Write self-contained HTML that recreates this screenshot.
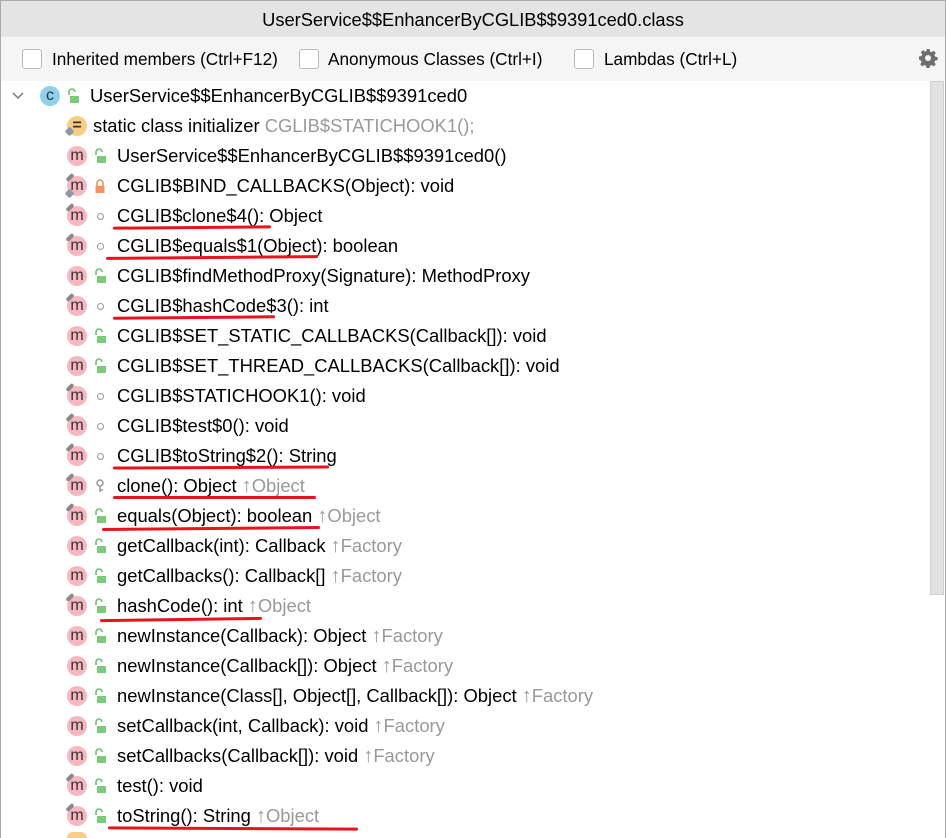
<!DOCTYPE html>
<html style="overflow:hidden;width:946px;height:838px"><head><meta charset="utf-8"><style>
*{margin:0;padding:0;box-sizing:border-box}
body{width:946px;height:838px;overflow:hidden;background:#fff;font-family:"Liberation Sans","Noto Sans CJK SC",sans-serif;position:relative;color:#000}
.title{position:absolute;left:0;top:0;width:946px;height:37px;background:#e4e4e4;border:1px solid #aaa;border-bottom:none;text-align:center;font-size:18.3px;line-height:37px;color:#000}
.tool{position:absolute;left:0;top:37px;width:946px;height:44px;background:#f5f5f5;border-left:1px solid #aaa;border-right:1px solid #aaa}
.cb{position:absolute;top:12px;width:20px;height:20px;border:1px solid #b8b8b8;border-radius:3px;background:#fff}
.lbl{position:absolute;top:12px;font-size:17.2px;line-height:20px;color:#000}
.tree{position:absolute;left:0;top:81px;width:946px;height:757px;border-left:1px solid #aaa;border-right:1px solid #aaa}
.sb{position:absolute;left:930px;top:81px;width:14px;height:514px;background:#e2e2e2;border:1px solid #d0d0d0}
.row{position:absolute;height:30px;font-size:18.4px;line-height:30px;white-space:nowrap}
.g{color:#999}
.ar{font-size:20px}
.ic{position:absolute;width:20px;height:20px;border-radius:50%;font-size:16px;line-height:19px;text-align:center;color:#333}
.m{background:#f7b7c0}
.sl{position:absolute;width:4px;height:9px;background:#888;transform:rotate(45deg);border-radius:2px}
.red{position:absolute;height:3px;background:#e8131d;border-radius:2px}
</style></head><body>
<div class="title">UserService$$EnhancerByCGLIB$$9391ced0.class</div>
<div class="tool">
<div class="cb" style="left:21px"></div><div class="lbl" style="left:51px">Inherited members (Ctrl+F12)</div>
<div class="cb" style="left:298px"></div><div class="lbl" style="left:327px">Anonymous Classes (Ctrl+I)</div>
<div class="cb" style="left:573px"></div><div class="lbl" style="left:603px">Lambdas (Ctrl+L)</div>
<svg style="position:absolute;left:917px;top:11px" width="20" height="20" viewBox="0 0 20 20"><path fill="#6e6e6e" d="M8.5 1h3l.5 2.5 1.6.7 2.1-1.4 2.1 2.1-1.4 2.1.7 1.6 2.5.5v3l-2.5.5-.7 1.6 1.4 2.1-2.1 2.1-2.1-1.4-1.6.7-.5 2.5h-3l-.5-2.5-1.6-.7-2.1 1.4-2.1-2.1 1.4-2.1-.7-1.6L1 11.5v-3l2.5-.5.7-1.6-1.4-2.1 2.1-2.1 2.1 1.4 1.6-.7z"/><circle cx="10" cy="10" r="3" fill="#f5f5f5"/></svg>
</div>
<div class="tree"></div>
<div class="sb"></div>
<svg style="position:absolute;left:11px;top:89px" width="14" height="14"><path d="M2 4l5 5 5-5" stroke="#777" stroke-width="1.5" fill="none"/></svg>
<div class="ic" style="left:40px;top:86px;background:#8fcff0">c</div>
<svg style="position:absolute;left:66px;top:88px" width="14" height="16"><path d="M3 7V4a3 3 0 0 1 6 0" stroke="#6ec26e" stroke-width="1.6" fill="none"/><rect x="4" y="8" width="9" height="7" fill="#7ccb7c"/></svg>
<div class="row" style="left:90px;top:81px">UserService$$EnhancerByCGLIB$$9391ced0</div>
<div class="ic" style="left:67px;top:116px;background:#f9cd86;font-weight:bold">=</div>
<div class="sl" style="left:66px;top:128px;background:#8a9aa8;width:7px;height:7px"></div>
<div class="row" style="left:93px;top:111px">static class initializer <span class="g">CGLIB$STATICHOOK1();</span></div>

<div id="rows"></div>
<script>
var rows=[
["o","UserService$$EnhancerByCGLIB$$9391ced0()",""],
["r","CGLIB$BIND_CALLBACKS(Object): void","",1],
["d","CGLIB$clone$4(): Object","",1],
["d","CGLIB$equals$1(Object): boolean","",1],
["o","CGLIB$findMethodProxy(Signature): MethodProxy",""],
["d","CGLIB$hashCode$3(): int","",1],
["o","CGLIB$SET_STATIC_CALLBACKS(Callback[]): void",""],
["o","CGLIB$SET_THREAD_CALLBACKS(Callback[]): void",""],
["d","CGLIB$STATICHOOK1(): void","",1],
["d","CGLIB$test$0(): void","",1],
["d","CGLIB$toString$2(): String","",1],
["k","clone(): Object","Object",1],
["o","equals(Object): boolean","Object",1],
["o","getCallback(int): Callback","Factory"],
["o","getCallbacks(): Callback[]","Factory"],
["o","hashCode(): int","Object",1],
["o","newInstance(Callback): Object","Factory"],
["o","newInstance(Callback[]): Object","Factory"],
["o","newInstance(Class[], Object[], Callback[]): Object","Factory"],
["o","setCallback(int, Callback): void","Factory"],
["o","setCallbacks(Callback[]): void","Factory"],
["o","test(): void","",1],
["o","toString(): String","Object",1]];
var h="";
rows.forEach(function(r,i){
 var top=141+30*i, cy=top+15;
 h+='<div class="ic m" style="left:67px;top:'+(cy-10)+'px">m</div>';
 if(r[3]) h+='<div class="sl" style="left:68px;top:'+(cy-13)+'px"></div>';
 if(r[0]=="r") h+='<div class="sl" style="left:66px;top:'+(cy+4)+'px;background:#8a9aa8;width:7px;height:7px"></div>';
 if(r[0]=="o") h+='<svg style="position:absolute;left:93px;top:'+(cy-8)+'px" width="14" height="16"><path d="M3 7V4a3 3 0 0 1 6 0" stroke="#6ec26e" stroke-width="1.6" fill="none"/><rect x="4" y="8" width="9" height="7" fill="#7ccb7c"/></svg>';
 if(r[0]=="r") h+='<svg style="position:absolute;left:94px;top:'+(cy-8)+'px" width="12" height="16"><path d="M3 8V5a3 3 0 0 1 6 0v3" stroke="#f0905a" stroke-width="1.6" fill="none"/><rect x="1.5" y="8" width="9" height="7" fill="#f4955e"/></svg>';
 if(r[0]=="d") h+='<div style="position:absolute;left:97px;top:'+(cy-3)+'px;width:7px;height:7px;border:1.5px solid #999;border-radius:50%"></div>';
 if(r[0]=="k") h+='<svg style="position:absolute;left:95px;top:'+(cy-7)+'px" width="10" height="14"><circle cx="5" cy="4" r="3" stroke="#999" stroke-width="1.5" fill="none"/><path d="M5 7v6M5 11h3" stroke="#999" stroke-width="1.5"/></svg>';
 h+='<div class="row" style="left:117px;top:'+top+'px">'+r[1]+(r[2]?' <span class="g"><span class="ar">&uarr;</span>'+r[2]+'</span>':'')+'</div>';
});
document.getElementById("rows").outerHTML=h;
</script>
<div class="ic" style="left:67px;top:832px;height:6px;border-radius:10px 10px 0 0;background:#f9cd86"></div>

<div class="red" style="left:113px;top:226px;width:158px;transform:rotate(-0.5deg)"></div>
<div class="red" style="left:106px;top:256px;width:212px;transform:rotate(-0.5deg)"></div>
<div class="red" style="left:113px;top:316px;width:162px;transform:rotate(-0.5deg)"></div>
<div class="red" style="left:113px;top:466px;width:216px;transform:rotate(-0.3deg)"></div>
<div class="red" style="left:113px;top:496px;width:203px"></div>
<div class="red" style="left:102px;top:527px;width:218px;transform:rotate(-0.5deg)"></div>
<div class="red" style="left:100px;top:618px;width:162px;transform:rotate(-0.8deg)"></div>
<div class="red" style="left:108px;top:827px;width:250px;transform:rotate(0.3deg)"></div>
</body></html>
